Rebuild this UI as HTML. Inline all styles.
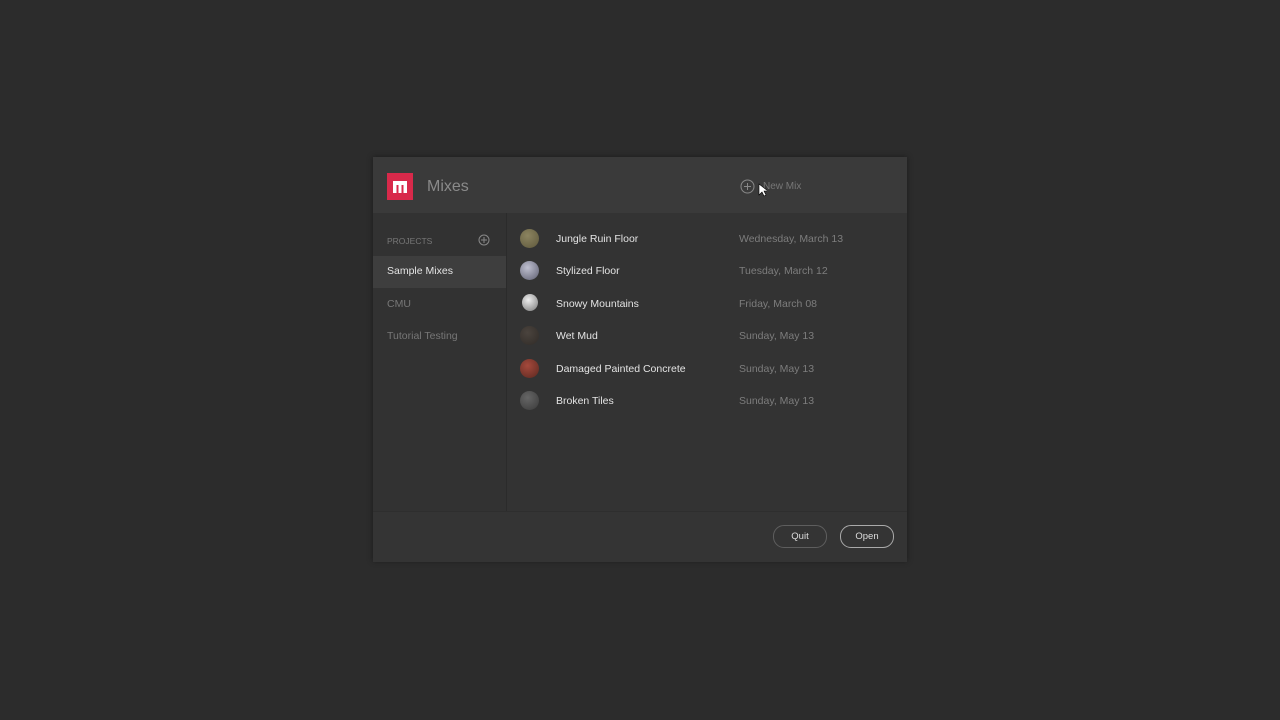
<!DOCTYPE html>
<html><head><style>
body{margin:0;width:1280px;height:720px;background:#2c2c2c;font-family:"Liberation Sans",sans-serif;overflow:hidden;position:relative}
.d{position:absolute;left:373px;top:157px;width:534px;height:404px;background:#333;box-shadow:0 0 6px rgba(0,0,0,.4)}
.hd{position:absolute;left:0;top:0;width:534px;height:56px;background:#3a3a3a}
.logo{position:absolute;left:14px;top:16px;width:26px;height:27px;background:#d8294a}
.t{position:absolute;color:#e4e4e4;font-size:10.5px;white-space:nowrap}
.g{color:#8a8a8a}
.side{position:absolute;left:0;top:56px;width:133px;height:298px;background:#323232;border-right:1px solid #2b2b2b}
.sel{position:absolute;left:0;top:99px;width:133px;height:32px;background:#3e3e3e}
.ft{position:absolute;left:0;top:354px;width:534px;height:50px;background:#343434;border-top:1px solid #2e2e2e}
.btn{position:absolute;top:368px;width:52px;height:21px;border:1px solid #777;border-radius:11px;color:#ddd;font-size:9.5px;text-align:center;line-height:21px}
.ball{position:absolute;left:147px;width:19px;height:19px;border-radius:50%}
</style></head><body>
<div class="d">
<div class="hd"></div>
<div class="logo"><svg width="26" height="27" viewBox="0 0 26 27"><path d="M6 20V8h14v12h-3.5v-8h-2v8h-3v-8h-2v8z" fill="#fff"/></svg></div>
<div class="t" style="left:54px;top:21px;font-size:16px;color:#8a8a8a">Mixes</div>
<svg style="position:absolute;left:367px;top:22px" width="15" height="15"><circle cx="7.5" cy="7.5" r="6.5" fill="none" stroke="#888" stroke-width="1"/><path d="M7.5 4v7M4 7.5h7" stroke="#888"/></svg>
<div class="t g" style="left:390px;top:24px;font-size:10px;color:#777">New Mix</div>
<svg style="position:absolute;left:385px;top:26px" width="9" height="14"><path d="M1 1v11l3-3 2 4 2-1-2-4h4z" fill="#fff" stroke="#000" stroke-width=".6"/></svg>
<div class="side"></div>
<div class="sel"></div>
<div class="t g" style="left:14px;top:79px;font-size:8.5px;color:#777">PROJECTS</div>
<svg style="position:absolute;left:105px;top:77px" width="12" height="12"><circle cx="6" cy="6" r="5" fill="none" stroke="#888"/><path d="M6 3v6M3 6h6" stroke="#888"/></svg>
<div class="t" style="left:14px;top:108px">Sample Mixes</div>
<div class="t g" style="left:14px;top:141px;color:#777">CMU</div>
<div class="t g" style="left:14px;top:173px;color:#777">Tutorial Testing</div>

<div class="ball" style="top:72px;background:radial-gradient(circle at 40% 35%,#8c8460,#5e583c)"></div>
<div class="ball" style="top:104px;background:radial-gradient(circle at 40% 35%,#bfc0d0,#5d5e70)"></div>
<div class="ball" style="top:137px;background:radial-gradient(circle at 40% 35%,#eee,#777);width:16px;height:17px;left:149px"></div>
<div class="ball" style="top:169px;background:radial-gradient(circle at 40% 35%,#4b443e,#302b27)"></div>
<div class="ball" style="top:202px;background:radial-gradient(circle at 40% 35%,#a5493c,#5a2820)"></div>
<div class="ball" style="top:234px;background:radial-gradient(circle at 40% 35%,#666,#3a3a3a)"></div>

<div class="t" style="left:183px;top:76px">Jungle Ruin Floor</div>
<div class="t" style="left:183px;top:108px">Stylized Floor</div>
<div class="t" style="left:183px;top:141px">Snowy Mountains</div>
<div class="t" style="left:183px;top:173px">Wet Mud</div>
<div class="t" style="left:183px;top:206px">Damaged Painted Concrete</div>
<div class="t" style="left:183px;top:238px">Broken Tiles</div>

<div class="t g" style="left:366px;top:76px;color:#7d7d7d">Wednesday, March 13</div>
<div class="t g" style="left:366px;top:108px;color:#7d7d7d">Tuesday, March 12</div>
<div class="t g" style="left:366px;top:141px;color:#7d7d7d">Friday, March 08</div>
<div class="t g" style="left:366px;top:173px;color:#7d7d7d">Sunday, May 13</div>
<div class="t g" style="left:366px;top:206px;color:#7d7d7d">Sunday, May 13</div>
<div class="t g" style="left:366px;top:238px;color:#7d7d7d">Sunday, May 13</div>

<div class="ft"></div>
<div class="btn" style="left:400px;border-color:#5e5e5e">Quit</div>
<div class="btn" style="left:467px;border-color:#aaa">Open</div>
</div>
</body></html>
